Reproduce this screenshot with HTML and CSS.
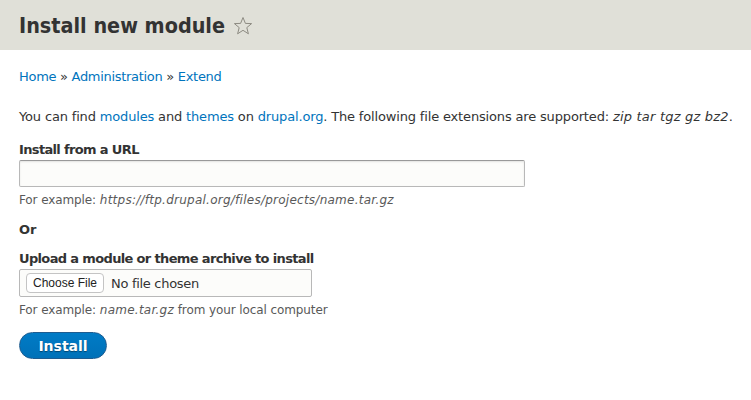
FILE: index.html
```html
<!DOCTYPE html>
<html>
  <head>
    <title>Install new module</title>
    <meta name="viewport" content="width=device-width, initial-scale=1">
    <link rel="stylesheet" href="styles.css">
  </head>
  <body>
    <div class="page-header">
      <h1>Install new module</h1>
      <svg class="shortcut" width="20" height="20" viewBox="0 0 20 20">
        <polygon points="10,1.5 12.4,7.4 18.6,7.6 13.8,11.6 15.4,17.8 10,14.3 4.6,17.8 6.2,11.6 1.4,7.6 7.6,7.4" fill="none" stroke="#8d8b82" stroke-width="1"/>
      </svg>
    </div>
    <div class="content">
      <div class="breadcrumb">
        <a href="#">Home</a> » <a href="#">Administration</a> » <a href="#">Extend</a>
      </div>
      <p class="intro">You can find <a href="#">modules</a> and <a href="#">themes</a> on <a href="#">drupal.org</a>. The following file extensions are supported: <em>zip tar tgz gz bz2</em>.</p>
      <form>
        <div class="form-item">
          <label for="url">Install from a URL</label>
          <input type="text" id="url" class="form-text">
          <div class="description">For example: <em>https://ftp.drupal.org/files/projects/name.tar.gz</em></div>
        </div>
        <div class="form-or">Or</div>
        <div class="form-item">
          <label>Upload a module or theme archive to install</label>
          <div class="form-file">
            <span class="file-btn">Choose File</span>
            <span class="file-none">No file chosen</span>
          </div>
          <div class="description">For example: <em>name.tar.gz</em> from your local computer</div>
        </div>
        <button type="button" class="button-primary">Install</button>
      </form>
    </div>
  </body>
</html>
```
FILE: styles.css
```css
html {font-family: "DejaVu Sans", Verdana, sans-serif; font-size: 13px; color: #333; letter-spacing: -0.16px;}
body {margin: 0; background: #fff;}
a {color: #0074bd; text-decoration: none;}
em {letter-spacing: 0.2px;}

.page-header {display: flex; align-items: center; height: 50px; padding: 0 19px; background: #e0e0d8;}
.page-header h1 {margin: 0; font-family: "DejaVu Sans Condensed", "DejaVu Sans", sans-serif; font-size: 21.4px; font-weight: bold; color: #333; letter-spacing: 0;}
.shortcut {margin-left: 8px; margin-top: 2px;}

.content {padding: 0 19px;}
.breadcrumb {margin-top: 18px; line-height: 18px; letter-spacing: -0.3px;}
.intro {margin: 22px 0 0; line-height: 18px; white-space: nowrap;}

.form-item {display: flex; flex-direction: column; align-items: flex-start;}
form .form-item:first-child {margin-top: 15px;}
label {font-weight: bold; line-height: 18px; margin-bottom: 1px; letter-spacing: -0.65px;}
.form-text {box-sizing: border-box; width: 506px; height: 27px; margin: 0; border: 1px solid #b8b8b8; border-top-color: #999; border-radius: 2px; background: #fcfcfa; box-shadow: inset 0 1px 2px rgba(0,0,0,0.1);}
.description {font-size: 12px; color: #595959; line-height: 16px; margin-top: 5px; letter-spacing: -0.1px;}
.description em {letter-spacing: 0.25px;}
.form-or {font-weight: bold; margin-top: 13px; margin-bottom: 11px; line-height: 18px;}

.form-file {box-sizing: border-box; display: flex; align-items: center; width: 293px; height: 28px; padding: 0 6px; border: 1px solid #b8b8b8; border-radius: 2px; background: #fcfcfa;}
.file-btn {font-family: "Liberation Sans", Arial, sans-serif; font-size: 12px; letter-spacing: 0; padding: 2px 6px; border: 1px solid #c4c4c4; border-radius: 4px; background: #fff; color: #222;}
.file-none {margin-left: 7px; color: #333; letter-spacing: -0.3px;}

.button-primary {display: block; margin-top: 14px; width: 88px; height: 27px; padding: 0; border: 1px solid #1e5c90; border-radius: 20px; background: linear-gradient(#007bc6, #0071b8); color: #fff; font-family: inherit; font-size: 14px; font-weight: bold; letter-spacing: 0; text-shadow: 0 1px 1px rgba(0,0,0,0.4);}
```
